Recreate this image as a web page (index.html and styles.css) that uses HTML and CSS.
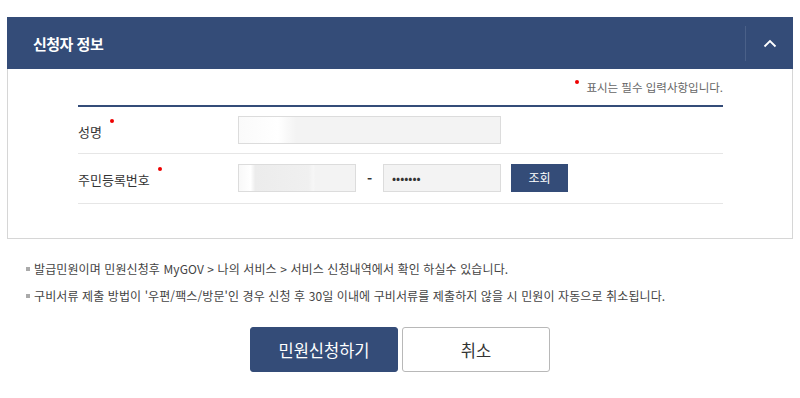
FILE: index.html
```html
<!DOCTYPE html>
<html lang="ko">
<head>
  <meta charset="UTF-8">
  <title>신청자 정보</title>
  <link rel="stylesheet" href="styles.css">
</head>
<body>
<div class="panel">
  <div class="panel-head">
    <h3>신청자 정보</h3>
    <span class="toggle">
      <svg width="14" height="9" viewBox="0 0 14 9"><path d="M1.5 7.5 L7 2 L12.5 7.5" fill="none" stroke="#fff" stroke-width="1.8"/></svg>
    </span>
  </div>
  <div class="panel-body">
    <p class="req-note"><span class="dot"></span>표시는 필수 입력사항입니다.</p>
    <div class="form-table">
      <div class="row row-name">
        <div class="label">성명<span class="dot"></span></div>
        <div class="field">
          <input type="text" class="inp inp-long blurred" value="">
        </div>
      </div>
      <div class="row row-id">
        <div class="label">주민등록번호<span class="dot"></span></div>
        <div class="field">
          <input type="text" class="inp inp-short blurred wide-blur" value="">
          <span class="dash">-</span>
          <input type="password" class="inp inp-short" value="1234567">
          <button type="button" class="btn-search">조회</button>
        </div>
      </div>
    </div>
  </div>
</div>

<ul class="notes">
  <li>발급민원이며 민원신청후 MyGOV &gt; 나의 서비스 &gt; 서비스 신청내역에서 확인 하실수 있습니다.</li>
  <li>구비서류 제출 방법이 '우편/팩스/방문'인 경우 신청 후 30일 이내에 구비서류를 제출하지 않을 시 민원이 자동으로 취소됩니다.</li>
</ul>

<div class="actions">
  <button type="button" class="btn btn-primary">민원신청하기</button>
  <button type="button" class="btn btn-cancel">취소</button>
</div>
</body>
</html>
```

FILE: styles.css
```css
body {
  margin: 0;
  font-family: "Noto Sans CJK KR", "Noto Sans", sans-serif;
  font-size: 13px;
  color: #333;
  background-color: #fff;
}

.panel {
  margin: 17px 7px 0;
  border: 1px solid #d6d6d6;
}

.panel-head {
  display: flex;
  align-items: center;
  height: 52px;
  background-color: #344c78;
  margin: -1px -1px 0;
}

.panel-head h3 {
  flex: 1;
  margin: 0;
  padding-left: 26px;
  font-size: 15px;
  font-weight: bold;
  color: #fff;
  letter-spacing: -0.5px;
}

.toggle {
  display: flex;
  align-items: center;
  justify-content: center;
  width: 47px;
  height: 35px;
  border-left: 1px solid #4a6088;
}

.panel-body {
  padding: 10px 69px 34px 70px;
}

.req-note {
  margin: 0 0 10px;
  text-align: right;
  font-size: 11.5px;
  line-height: 16px;
  color: #666;
}

.req-note .dot {
  margin-right: 7px;
  vertical-align: 8px;
}

.dot {
  display: inline-block;
  width: 4px;
  height: 4px;
  border-radius: 50%;
  background-color: #e00;
}

.form-table {
  border-top: 2px solid #344c78;
}

.row {
  display: flex;
  align-items: center;
  border-bottom: 1px solid #e6e6e6;
}

.row-name {
  height: 46px;
}

.row-id {
  height: 50px;
  padding-bottom: 2px;
  box-sizing: border-box;
}

.label {
  width: 160px;
  font-size: 13px;
  color: #333;
}

.label .dot {
  margin-left: 8px;
  vertical-align: 14px;
}

.field {
  display: flex;
  align-items: center;
}

.inp {
  height: 28px;
  box-sizing: border-box;
  border: 1px solid #dcdcdc;
  background-color: #f3f3f3;
  padding: 0 8px;
  font-family: inherit;
  font-size: 12px;
  color: #333;
}

.inp-long {
  width: 263px;
}

.inp-short {
  width: 118px;
}

.blurred {
  background-image: linear-gradient(to right, #fafafa 0, #fff 15%, #f6f6f6 20%, #f3f3f3 22%);
}

.wide-blur {
  background-image: linear-gradient(to right, #f8f8f8 0, #fff 10%, #ececec 14%, #f0f0f0 60%, #f6f6f6 64%, #f3f3f3 66%);
}

.dash {
  width: 27px;
  text-align: center;
  font-size: 14px;
  font-weight: bold;
  color: #333;
}

.btn-search {
  margin-left: 10px;
  width: 57px;
  height: 28px;
  border: 0;
  background-color: #344c78;
  color: #fff;
  font-family: inherit;
  font-size: 12px;
}

.notes {
  margin: 16px 0 0;
  padding: 0 0 0 26px;
  list-style: none;
}

.notes li {
  position: relative;
  padding-left: 8px;
  font-size: 12px;
  line-height: 27px;
  color: #444;
  letter-spacing: 0.1px;
}

.notes li:before {
  content: "";
  position: absolute;
  left: 0;
  top: 12px;
  width: 4px;
  height: 4px;
  background-color: #aaa;
}

.actions {
  display: flex;
  justify-content: center;
  gap: 4px;
  margin-top: 18px;
}

.btn {
  width: 148px;
  height: 45px;
  border-radius: 3px;
  font-family: inherit;
  font-size: 16.5px;
}

.btn-primary {
  border: 1px solid #344c78;
  background-color: #344c78;
  color: #fff;
}

.btn-cancel {
  border: 1px solid #b8b8b8;
  background-color: #fff;
  color: #333;
}
```
